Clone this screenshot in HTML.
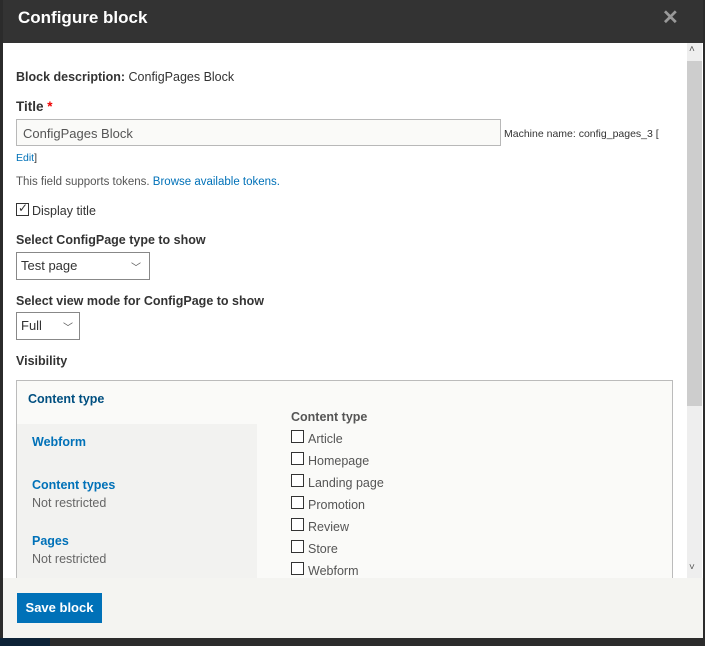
<!DOCTYPE html>
<html><head><meta charset="utf-8"><style>
*{margin:0;padding:0;box-sizing:border-box}
body{width:705px;height:646px;background:#2b2b2b;position:relative;overflow:hidden;font-family:"Liberation Sans",sans-serif;color:#333}
.a{position:absolute;white-space:nowrap}
.lnk{color:#0071b8}
.b{font-weight:bold}
.cb{position:absolute;width:13px;height:13px;border:1px solid #333;background:#fff}
</style></head><body>
<div class="a" style="left:3px;top:0;width:700px;height:43px;background:#333"></div>
<div class="a" style="left:18px;top:8px;font-size:17px;font-weight:bold;color:#fff">Configure block</div>
<div class="a" style="left:662px;top:5px;font-size:20px;font-weight:bold;color:#999">✕</div>
<div class="a" style="left:3px;top:43px;width:700px;height:535px;background:#fff"></div>
<div class="a" style="left:687px;top:43px;width:15px;height:535px;background:#eee"></div>
<div class="a" style="left:687px;top:61px;width:15px;height:345px;background:#cdcdcd"></div>
<div class="a" style="left:689px;top:44px;font-size:10px;color:#555">˄</div>
<div class="a" style="left:689px;top:562px;font-size:10px;color:#555">˅</div>
<div class="a" style="left:16px;top:70px;font-size:12.5px"><span class="b">Block description:</span> ConfigPages Block</div>
<div class="a b" style="left:16px;top:99px;font-size:13.5px">Title <span style="color:#e00">*</span></div>
<div class="a" style="left:16px;top:119px;width:485px;height:27px;border:1px solid #b8b8b8;background:#fafaf8;font-size:13px;padding:6px 0 0 6px;color:#555">ConfigPages Block</div>
<div class="a" style="left:504px;top:128px;font-size:10.5px">Machine name: config_pages_3 [</div>
<div class="a lnk" style="left:16px;top:152px;font-size:10.5px">Edit<span style="color:#333">]</span></div>
<div class="a" style="left:16px;top:176px;font-size:11.5px;color:#555">This field supports tokens. <span class="lnk">Browse available tokens.</span></div>
<div class="cb" style="left:16px;top:203px"><span style="position:absolute;left:1px;top:-3px;font-size:12px">✓</span></div>
<div class="a" style="left:32px;top:204px;font-size:12.5px">Display title</div>
<div class="a b" style="left:16px;top:233px;font-size:12.5px">Select ConfigPage type to show</div>
<div class="a" style="left:16px;top:252px;width:134px;height:28px;border:1px solid #888;font-size:13px;padding:5px 0 0 4px">Test page<span style="position:absolute;right:8px;top:6px;font-size:10px;color:#555">﹀</span></div>
<div class="a b" style="left:16px;top:294px;font-size:12.5px">Select view mode for ConfigPage to show</div>
<div class="a" style="left:16px;top:312px;width:64px;height:28px;border:1px solid #888;font-size:13px;padding:5px 0 0 4px">Full<span style="position:absolute;right:6px;top:6px;font-size:10px;color:#555">﹀</span></div>
<div class="a b" style="left:16px;top:354px;font-size:12.5px">Visibility</div>
<div class="a" style="left:16px;top:380px;width:657px;height:210px;border:1px solid #bbb;background:#fafaf8"></div>
<div class="a" style="left:17px;top:424px;width:240px;height:154px;background:#f2f2f0"></div>
<div class="a b" style="left:28px;top:392px;font-size:12.5px;color:#004f80">Content type</div>
<div class="a b" style="left:32px;top:435px;font-size:12.5px;color:#0071b8">Webform</div>
<div class="a b" style="left:32px;top:478px;font-size:12.5px;color:#0071b8">Content types</div>
<div class="a" style="left:32px;top:496px;font-size:12.5px;color:#666">Not restricted</div>
<div class="a b" style="left:32px;top:534px;font-size:12.5px;color:#0071b8">Pages</div>
<div class="a" style="left:32px;top:552px;font-size:12.5px;color:#666">Not restricted</div>
<div class="a b" style="left:291px;top:410px;font-size:12.5px;color:#555">Content type</div>
<div class="cb" style="left:291px;top:430px"></div><div class="a" style="left:308px;top:432px;font-size:12.5px;color:#555">Article</div>
<div class="cb" style="left:291px;top:452px"></div><div class="a" style="left:308px;top:454px;font-size:12.5px;color:#555">Homepage</div>
<div class="cb" style="left:291px;top:474px"></div><div class="a" style="left:308px;top:476px;font-size:12.5px;color:#555">Landing page</div>
<div class="cb" style="left:291px;top:496px"></div><div class="a" style="left:308px;top:498px;font-size:12.5px;color:#555">Promotion</div>
<div class="cb" style="left:291px;top:518px"></div><div class="a" style="left:308px;top:520px;font-size:12.5px;color:#555">Review</div>
<div class="cb" style="left:291px;top:540px"></div><div class="a" style="left:308px;top:542px;font-size:12.5px;color:#555">Store</div>
<div class="cb" style="left:291px;top:562px"></div><div class="a" style="left:308px;top:564px;font-size:12.5px;color:#555">Webform</div>
<div class="a" style="left:3px;top:578px;width:700px;height:60px;background:#f4f4f1"></div>
<div class="a" style="left:17px;top:593px;width:85px;height:30px;background:#0071b8;color:#fff;font-weight:bold;font-size:13px;text-align:center;line-height:30px">Save block</div>
<div class="a" style="left:0;top:638px;width:50px;height:8px;background:#0d2236"></div>
</body></html>
